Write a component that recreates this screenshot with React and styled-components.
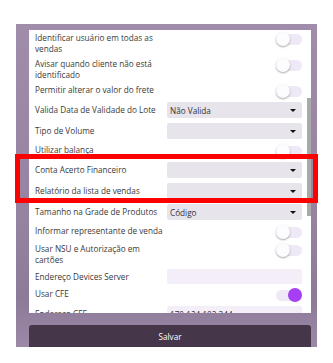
import React from "react";
import styled, { createGlobalStyle } from "styled-components";

const Global = createGlobalStyle`
  html, body { margin: 0; padding: 0; background: #ffffff; }
  body { font-family: "Open Sans", "Noto Sans", sans-serif; }
  * { box-sizing: border-box; }
`;

const Page = styled.div`
  width: 333px;
  height: 363px;
  padding: 24px 0 0 16px;
  overflow: hidden;
`;

const Frame = styled.div`
  position: relative;
  width: 301px;
  height: 323px;
  padding: 6px 6px 0 13px;
  background: linear-gradient(180deg, #a08cab 0%, #9683a0 60%, #8d7a98 85%, #9b89a7 100%);
  display: flex;
  flex-direction: column;
  gap: 12px;
`;

const Panel = styled.div`
  height: 283px;
  flex-shrink: 0;
  background: #ffffff;
  display: flex;
  overflow: hidden;
`;

const List = styled.div`
  flex: 1;
  padding: 2px 5px 0 6px;
  display: flex;
  flex-direction: column;
  gap: 4px;
`;

const ScrollTrack = styled.div`
  width: 4px;
  display: flex;
  flex-direction: column;
`;

const ScrollThumb = styled.div`
  margin-top: 68px;
  height: 118px;
  background: #a9a9a9;
`;

const Row = styled.div`
  display: grid;
  grid-template-columns: 1fr 135px;
  column-gap: 2px;
  align-items: start;
  min-height: ${(p) => p.$min || 14}px;
  flex-shrink: 0;
`;

const Label = styled.div`
  font-size: 8.2px;
  line-height: 11px;
  color: #3a3a3a;
  padding-top: ${(p) => p.$pt || 0}px;
`;

const Switch = styled.div`
  justify-self: end;
  position: relative;
  width: 26px;
  height: 14px;
  display: flex;
  align-items: center;
  justify-content: ${(p) => (p.$on ? "flex-end" : "flex-start")};
  &::before {
    content: "";
    position: absolute;
    left: 0;
    right: 0;
    top: 1.5px;
    height: 11px;
    border-radius: 6px;
    background: #efe9f7;
  }
`;

const Knob = styled.span`
  position: relative;
  width: 14px;
  height: 14px;
  border-radius: 50%;
  background: ${(p) => (p.$on ? "#a63ff4" : "#fcfbfe")};
  box-shadow: ${(p) => (p.$on ? "none" : "0 1px 2px rgba(0,0,0,0.35)")};
`;

const Select = styled.div`
  height: 16px;
  background: #e8e4ec;
  border-radius: 2px;
  padding: 0 6px 0 3px;
  display: flex;
  align-items: center;
  justify-content: space-between;
  font-size: 8.2px;
  color: #333;
`;

const Caret = styled.span`
  width: 0;
  height: 0;
  border-left: 3px solid transparent;
  border-right: 3px solid transparent;
  border-top: 3px solid #111;
`;

const Input = styled.div`
  height: 15px;
  background: #f3eef8;
  border-radius: 2px;
  padding: 2px 3px 0;
  font-size: 8.2px;
  line-height: 13px;
  color: #333;
`;

const SaveButton = styled.button`
  height: 22px;
  flex-shrink: 0;
  border: none;
  border-radius: 3px 3px 0 0;
  background: #45364a;
  color: #ffffff;
  font-family: "Open Sans", "Noto Sans", sans-serif;
  font-size: 8.2px;
  padding: 0;
`;

const Highlight = styled.div`
  position: absolute;
  left: -1px;
  top: 130px;
  width: 303px;
  height: 49px;
  border: 5px solid #ff0000;
  pointer-events: none;
`;

const ToggleRow = ({ label, on }) => (
  <Row $min={14}>
    <Label>{label}</Label>
    <Switch $on={on}>
      <Knob $on={on} />
    </Switch>
  </Row>
);

const SelectRow = ({ label, value }) => (
  <Row $min={17}>
    <Label $pt={2}>{label}</Label>
    <Select>
      <span>{value}</span>
      <Caret />
    </Select>
  </Row>
);

const InputRow = ({ label, value }) => (
  <Row $min={15}>
    <Label $pt={2}>{label}</Label>
    <Input>{value}</Input>
  </Row>
);

export default function App() {
  return (
    <Page>
      <Global />
      <Frame>
        <Panel>
          <List>
            <ToggleRow label="Identificar usuário em todas as vendas" />
            <ToggleRow label="Avisar quando cliente não está identificado" />
            <ToggleRow label="Permitir alterar o valor do frete" />
            <SelectRow label="Valida Data de Validade do Lote" value="Não Valida" />
            <SelectRow label="Tipo de Volume" value="" />
            <ToggleRow label="Utilizar balança" />
            <SelectRow label="Conta Acerto Financeiro" value="" />
            <SelectRow label="Relatório da lista de vendas" value="" />
            <SelectRow label="Tamanho na Grade de Produtos" value="Código" />
            <ToggleRow label="Informar representante de venda" />
            <ToggleRow label="Usar NSU e Autorização em cartões" />
            <InputRow label="Endereço Devices Server" value="" />
            <ToggleRow label="Usar CFE" on />
            <InputRow label="Endereço CFE" value="170.124.102.244" />
          </List>
          <ScrollTrack>
            <ScrollThumb />
          </ScrollTrack>
        </Panel>
        <SaveButton>Salvar</SaveButton>
        <Highlight />
      </Frame>
    </Page>
  );
}
